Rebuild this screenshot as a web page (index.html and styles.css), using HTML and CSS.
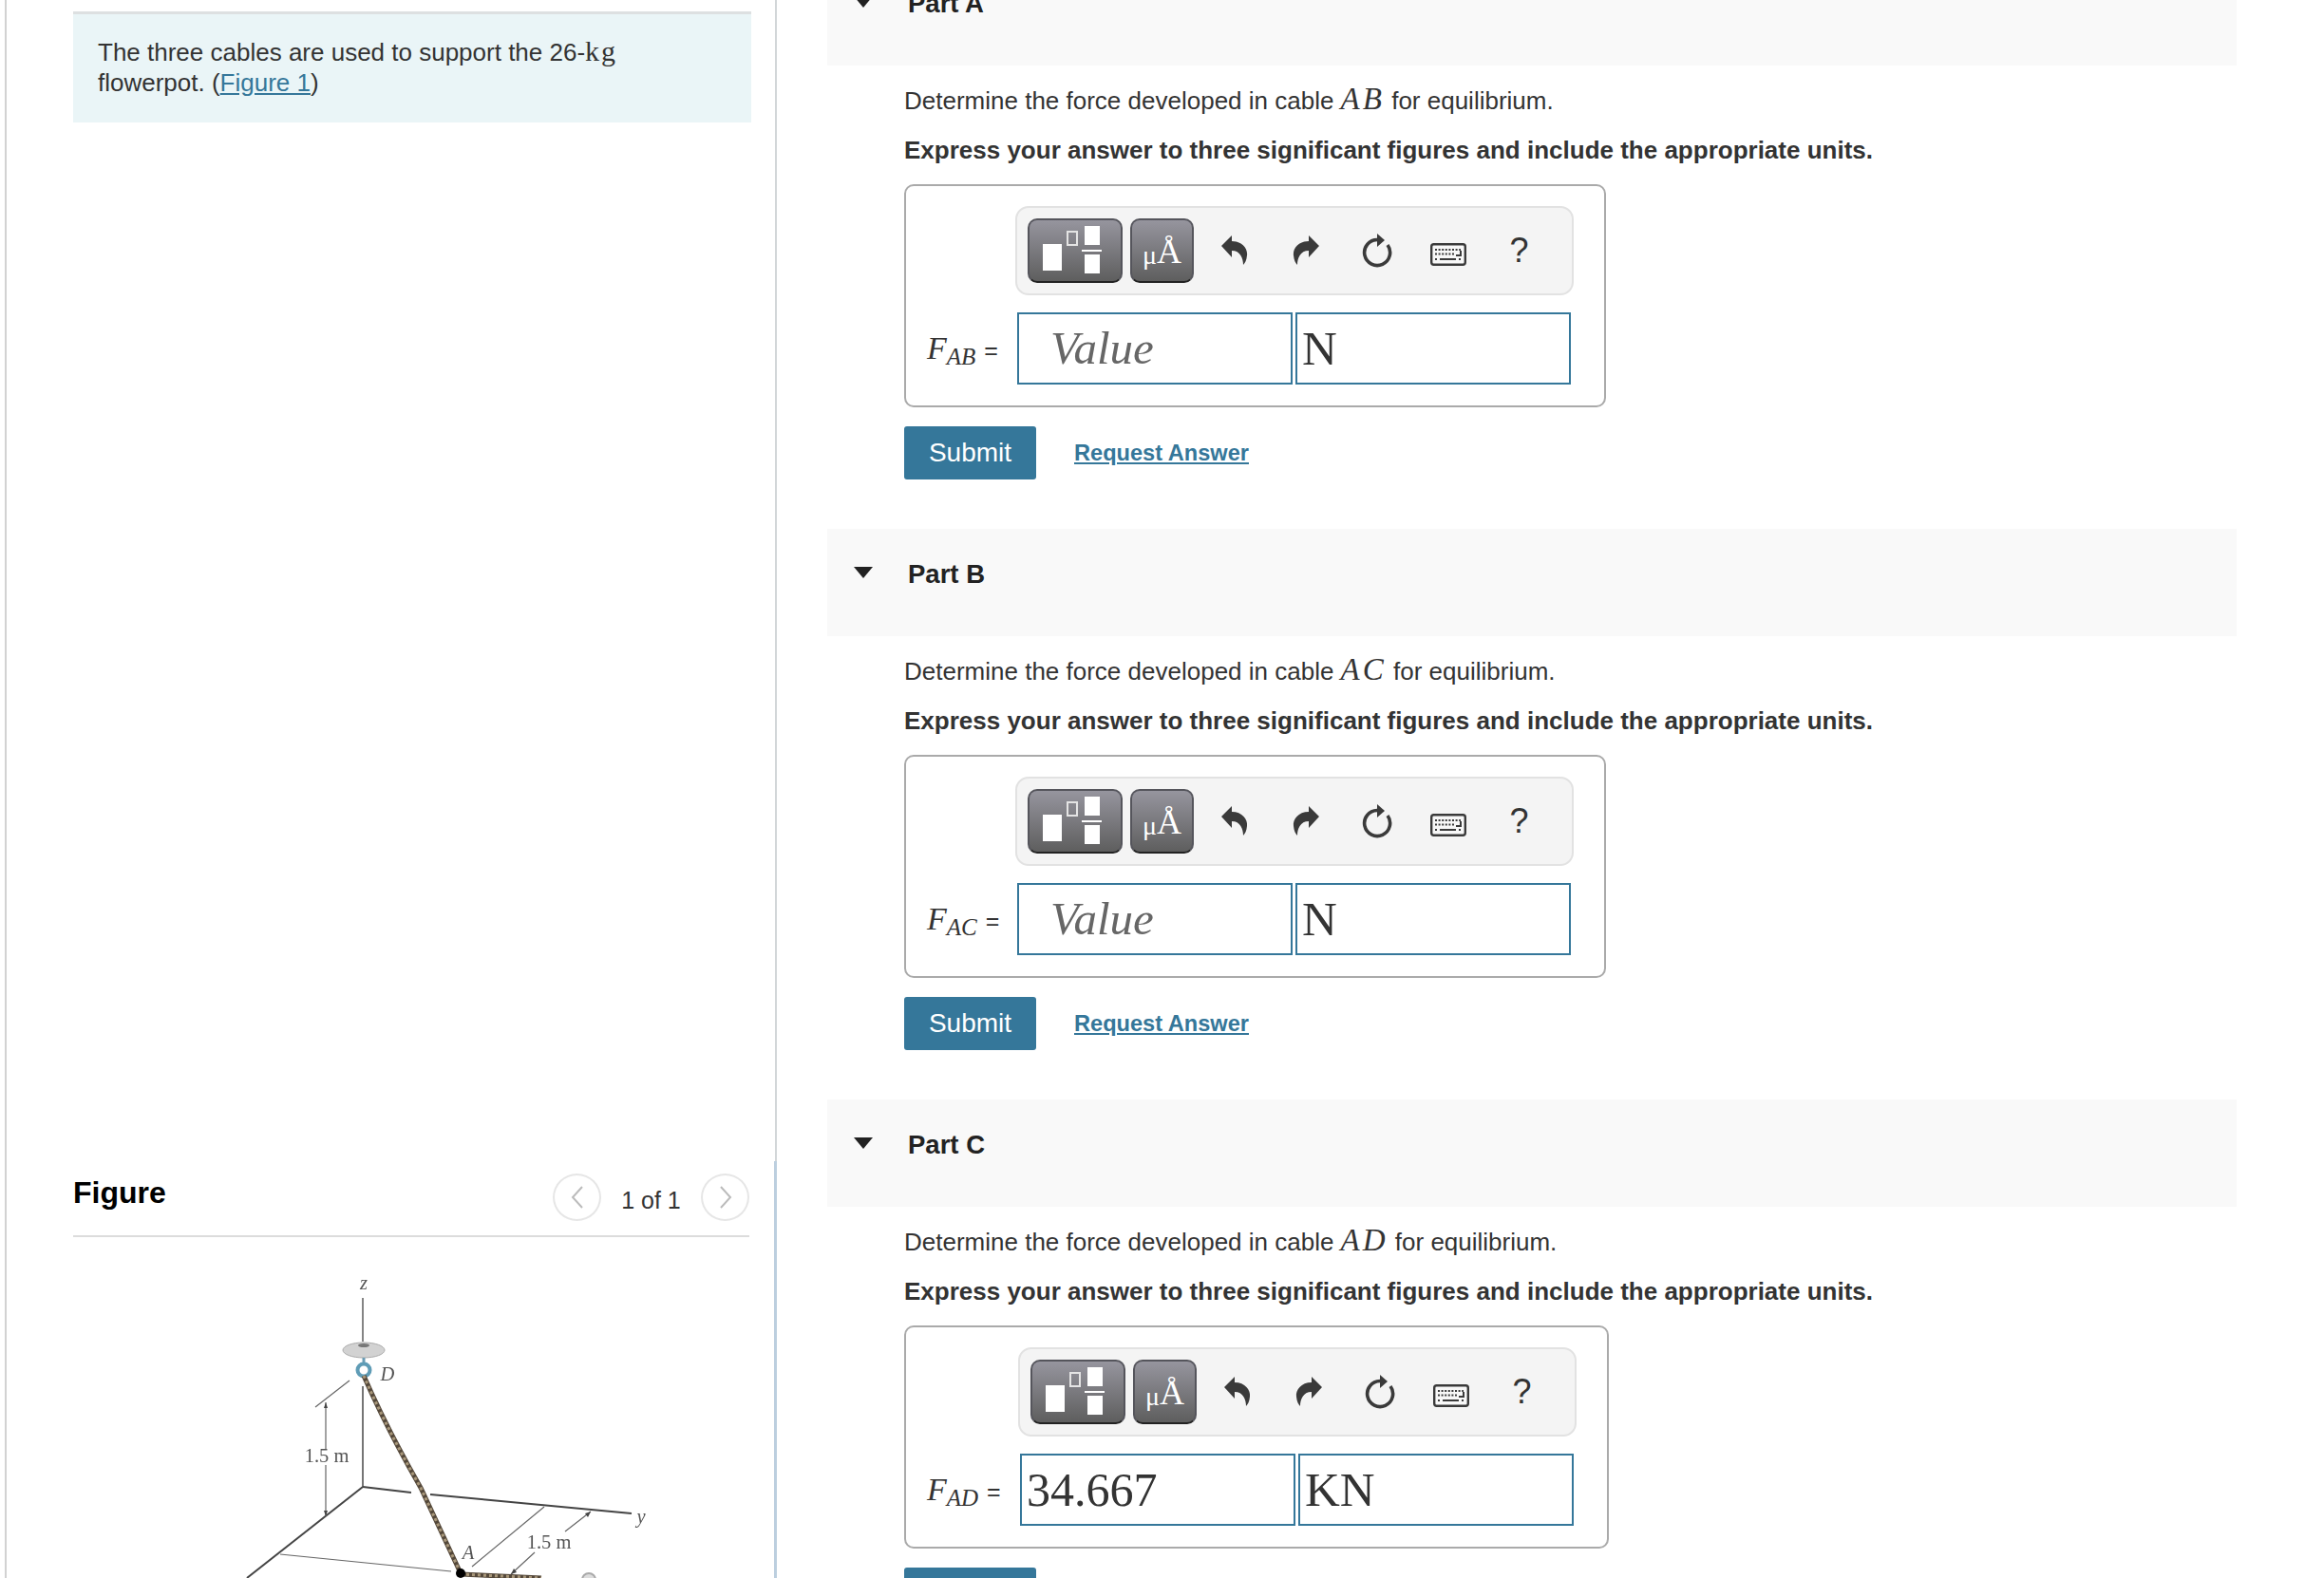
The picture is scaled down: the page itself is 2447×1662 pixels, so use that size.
FILE: index.html
```html
<!DOCTYPE html>
<html lang="en">
<head>
  <meta charset="UTF-8">
  <title>Cables and flowerpot</title>
  <link rel="stylesheet" href="styles.css">
</head>
<body>
  <!-- toolbar icons, reused in every answer box -->
  <svg class="sprite" aria-hidden="true">
    <symbol id="i-templates" viewBox="0 0 96 64">
      <rect x="14" y="25" width="20" height="28" fill="#fff"/>
      <rect x="40" y="12" width="10" height="14" fill="none" stroke="#e4e4e4" stroke-width="2"/>
      <rect x="58" y="6" width="16" height="20" fill="#fff"/>
      <rect x="55" y="31" width="21" height="2" fill="#fff"/>
      <rect x="58" y="36" width="16" height="20" fill="#fff"/>
    </symbol>
    <symbol id="i-undo" viewBox="0 0 28 32">
      <path d="M0 11 L11 0 V6 C22 6 28 14 27 21 C26.5 26 25 29 23 31 C23 24 20 16 11 16 V23 Z" fill="#3a3a3a"/>
    </symbol>
    <symbol id="i-reload" viewBox="0 0 32 37">
      <path d="M16 6.5 A13.5 13.5 0 1 0 27 12" fill="none" stroke="#3a3a3a" stroke-width="3.6"/>
      <path d="M16 0 L24 7 L16 14 Z" fill="#3a3a3a"/>
    </symbol>
    <symbol id="i-keyboard" viewBox="0 0 38 24">
      <rect x="1.2" y="1.2" width="35.6" height="21.6" rx="2.5" fill="#f8f8f8" stroke="#3a3a3a" stroke-width="2.4"/>
      <path d="M5 7 H32" stroke="#3a3a3a" stroke-width="2" stroke-dasharray="2 1.6"/>
      <path d="M5 11.5 H26" stroke="#3a3a3a" stroke-width="2" stroke-dasharray="2 1.6"/>
      <path d="M32 8 V13 H27" fill="none" stroke="#3a3a3a" stroke-width="2"/>
      <path d="M5 17 H7 M10 17 H27 M30 17 H32" stroke="#3a3a3a" stroke-width="2"/>
    </symbol>
  </svg>

  <div class="page">
    <div class="left-col">
      <section class="intro-wrap">
        <div class="intro">
          The three cables are used to support the 26-<span class="unit">kg</span><br>
          flowerpot. (<a href="#">Figure 1</a>)
        </div>
      </section>
      <section class="figure-wrap">
        <div class="figure-head">
          <h2>Figure</h2>
          <div class="pager">
            <span class="pager-btn"><svg width="14" height="26" viewBox="0 0 14 26"><path d="M12 2 L2 13 L12 24" fill="none" stroke="#bbb" stroke-width="2"/></svg></span>
            <span class="pager-text">1 of 1</span>
            <span class="pager-btn"><svg width="14" height="26" viewBox="0 0 14 26"><path d="M2 2 L12 13 L2 24" fill="none" stroke="#bbb" stroke-width="2"/></svg></span>
          </div>
        </div>
        <svg class="diagram" viewBox="77 1303 712 359" width="712" height="359">
          <g fill="none" stroke="#666">
            <path d="M382 1367 V1413" stroke-width="1.6"/>
            <path d="M382 1460 V1566" stroke-width="1.8"/>
            <path d="M382 1566 L433 1572 M453 1574 L665 1594" stroke="#444" stroke-width="2"/>
            <path d="M382 1566 L260 1662" stroke="#444" stroke-width="2"/>
            <path d="M332 1482 L368 1454" stroke-width="1.2"/>
            <path d="M343 1477 V1527 M343 1543 V1597" stroke-width="1.2"/>
            <path d="M295 1637 L475 1655" stroke-width="1.2"/>
            <path d="M497 1650 L573 1587" stroke-width="1.2"/>
            <path d="M595 1613 L622 1592 M563 1635 L538 1658" stroke-width="1.2"/>
          </g>
          <path d="M343 1477 l-2 6 h4 Z M343 1597 l-2 -6 h4 Z M622 1592 l-6 2 l3 4 Z M538 1658 l6 -2 l-3 -4 Z" fill="#444"/>
          <ellipse cx="383" cy="1422" rx="22" ry="8" fill="#d2d2d2" stroke="#aaa"/>
          <ellipse cx="383" cy="1417" rx="6" ry="2" fill="#777"/>
          <path d="M383 1430 V1436" stroke="#6b9db5" stroke-width="3"/>
          <circle cx="383" cy="1443" r="6.5" fill="#fff" stroke="#5f9cb6" stroke-width="4"/>
          <path class="rope" d="M383 1449 Q408 1506 443 1567 L485 1657"/>
          <path class="rope-twist" d="M383 1449 Q408 1506 443 1567 L485 1657"/>
          <path class="rope" d="M485 1658 L570 1662"/>
          <path class="rope-twist" d="M485 1658 L570 1662"/>
          <circle cx="485" cy="1657" r="5" fill="#000"/>
          <circle cx="620" cy="1664" r="7" fill="#ddd" stroke="#aaa" stroke-width="2"/>
          <g class="dia-label">
            <text x="383" y="1358" class="dia-it" text-anchor="middle">z</text>
            <text x="408" y="1454" class="dia-it" text-anchor="middle">D</text>
            <text x="493" y="1642" class="dia-it" text-anchor="middle">A</text>
            <text x="675" y="1604" class="dia-it" text-anchor="middle">y</text>
            <text x="344" y="1540" text-anchor="middle">1.5 m</text>
            <text x="578" y="1631" text-anchor="middle">1.5 m</text>
          </g>
        </svg>
      </section>
    </div>

    <div class="right-col">
      <section class="part">
        <header class="part-head"><span class="caret"></span><h3>Part A</h3></header>
        <div class="part-body">
          <p class="question">Determine the force developed in cable <span class="math">AB</span> for equilibrium.</p>
          <p class="instruction">Express your answer to three significant figures and include the appropriate units.</p>
          <div class="answer-box">
            <div class="toolbar">
              <button class="tool tool-wide"><svg width="96" height="64"><use href="#i-templates"/></svg></button>
              <button class="tool tool-unit"><span class="mu">μ</span><span class="ang">Å</span></button>
              <span class="slot first"><svg width="28" height="32"><use href="#i-undo"/></svg></span>
              <span class="slot"><svg class="flip" width="28" height="32"><use href="#i-undo"/></svg></span>
              <span class="slot"><svg width="32" height="37"><use href="#i-reload"/></svg></span>
              <span class="slot kbd"><svg width="38" height="24"><use href="#i-keyboard"/></svg></span>
              <span class="slot help">?</span>
            </div>
            <label class="var"><i>F</i><sub>AB</sub><span class="eq">=</span></label>
            <div class="field placeholder"><span>Value</span></div>
            <div class="field unit-field">N</div>
          </div>
          <div class="actions"><button class="submit">Submit</button><a href="#" class="request">Request Answer</a></div>
        </div>
      </section>

      <section class="part">
        <header class="part-head"><span class="caret"></span><h3>Part B</h3></header>
        <div class="part-body">
          <p class="question">Determine the force developed in cable <span class="math">AC</span> for equilibrium.</p>
          <p class="instruction">Express your answer to three significant figures and include the appropriate units.</p>
          <div class="answer-box">
            <div class="toolbar">
              <button class="tool tool-wide"><svg width="96" height="64"><use href="#i-templates"/></svg></button>
              <button class="tool tool-unit"><span class="mu">μ</span><span class="ang">Å</span></button>
              <span class="slot first"><svg width="28" height="32"><use href="#i-undo"/></svg></span>
              <span class="slot"><svg class="flip" width="28" height="32"><use href="#i-undo"/></svg></span>
              <span class="slot"><svg width="32" height="37"><use href="#i-reload"/></svg></span>
              <span class="slot kbd"><svg width="38" height="24"><use href="#i-keyboard"/></svg></span>
              <span class="slot help">?</span>
            </div>
            <label class="var"><i>F</i><sub>AC</sub><span class="eq">=</span></label>
            <div class="field placeholder"><span>Value</span></div>
            <div class="field unit-field">N</div>
          </div>
          <div class="actions"><button class="submit">Submit</button><a href="#" class="request">Request Answer</a></div>
        </div>
      </section>

      <section class="part">
        <header class="part-head"><span class="caret"></span><h3>Part C</h3></header>
        <div class="part-body">
          <p class="question">Determine the force developed in cable <span class="math">AD</span> for equilibrium.</p>
          <p class="instruction">Express your answer to three significant figures and include the appropriate units.</p>
          <div class="answer-box wide-var">
            <div class="toolbar">
              <button class="tool tool-wide"><svg width="96" height="64"><use href="#i-templates"/></svg></button>
              <button class="tool tool-unit"><span class="mu">μ</span><span class="ang">Å</span></button>
              <span class="slot first"><svg width="28" height="32"><use href="#i-undo"/></svg></span>
              <span class="slot"><svg class="flip" width="28" height="32"><use href="#i-undo"/></svg></span>
              <span class="slot"><svg width="32" height="37"><use href="#i-reload"/></svg></span>
              <span class="slot kbd"><svg width="38" height="24"><use href="#i-keyboard"/></svg></span>
              <span class="slot help">?</span>
            </div>
            <label class="var"><i>F</i><sub>AD</sub><span class="eq">=</span></label>
            <div class="field">34.667</div>
            <div class="field unit-field">KN</div>
          </div>
          <div class="actions"><button class="submit">Submit</button><a href="#" class="request">Request Answer</a></div>
        </div>
      </section>
    </div>
  </div>
</body>
</html>
```

FILE: styles.css
```css
html, body {
  margin: 0;
  height: 1662px;
  overflow: hidden;
  background: #fff;
  color: #333;
  font-family: "Liberation Sans", Arial, sans-serif;
  font-size: 26px;
}

.sprite {
  display: none;
}

.page {
  display: flex;
  height: 1662px;
  overflow: hidden;
  padding-left: 5px;
  box-sizing: border-box;
}

/* left panel */
.left-col {
  width: 813px;
  flex: none;
  border-left: 2px solid #d2d2d2;
  box-sizing: border-box;
}

.intro-wrap {
  height: 1223px;
  padding: 12px 25px 0 70px;
  border-right: 2px solid #d2d6d8;
  box-sizing: border-box;
}

.intro {
  border-top: 3px solid #dde0e1;
  background: #eaf5f7;
  height: 117px;
  padding: 24px 26px 0;
  box-sizing: border-box;
  line-height: 32px;
}

.intro a {
  color: #35779a;
}

.unit {
  font-family: "Liberation Serif", serif;
  font-size: 30px;
  line-height: 0;
  letter-spacing: 2px;
}

.figure-wrap {
  height: 439px;
  padding: 0 26px 0 70px;
  border-right: 3px solid #bccfdf;
  box-sizing: border-box;
}

.figure-head {
  display: flex;
  justify-content: space-between;
  align-items: flex-start;
  height: 78px;
  border-bottom: 2px solid #dcdcdc;
}

.figure-head h2 {
  margin: 15px 0 0;
  color: #000;
  font-size: 32px;
  line-height: 36px;
}

.pager {
  display: flex;
  align-items: center;
  margin-top: 13px;
}

.pager-btn {
  display: flex;
  align-items: center;
  justify-content: center;
  width: 47px;
  height: 46px;
  border: 2px solid #e6e6e6;
  border-radius: 50%;
}

.pager-text {
  width: 105px;
  text-align: center;
  padding-top: 6px;
  font-size: 25px;
}

.diagram {
  display: block;
  filter: blur(0.6px);
}

.rope {
  fill: none;
  stroke: #54483a;
  stroke-width: 5;
}

.rope-twist {
  fill: none;
  stroke: #a8977a;
  stroke-width: 3;
  stroke-dasharray: 3 3;
}

.dia-label text {
  font-family: "Liberation Serif", serif;
  font-size: 20.5px;
  fill: #555;
}

.dia-label .dia-it {
  font-style: italic;
}

/* right panel */
.right-col {
  width: 1484px;
  flex: none;
  margin: -44px 0 0 53px;
}

.part {
  margin-bottom: 52px;
}

.part-head {
  display: flex;
  align-items: flex-start;
  height: 113px;
  padding: 31px 0 0 28px;
  box-sizing: border-box;
  background: #f9f9f9;
}

.caret {
  width: 0;
  height: 0;
  margin: 9px 37px 0 0;
  border-left: 10.5px solid transparent;
  border-right: 10.5px solid transparent;
  border-top: 12px solid #222;
}

.part-head h3 {
  margin: 0;
  color: #222;
  font-size: 27.5px;
  line-height: 34px;
}

.part-body {
  padding-left: 81px;
}

.question {
  margin: 21px 0 20px;
  line-height: 32px;
}

.math {
  font-family: "Liberation Serif", serif;
  font-style: italic;
  font-size: 33px;
  line-height: 0;
  letter-spacing: 3px;
}

.instruction {
  margin: 0 0 20px;
  line-height: 32px;
  font-weight: bold;
}

.answer-box {
  display: inline-grid;
  grid-template-columns: 92px 290px 290px;
  column-gap: 3px;
  row-gap: 18px;
  align-items: center;
  height: 235px;
  padding: 21px 35px 22px 22px;
  border: 2px solid #aaa;
  border-radius: 10px;
  box-sizing: border-box;
  vertical-align: top;
}

.answer-box.wide-var {
  grid-template-columns: 95px 290px 290px;
}

.toolbar {
  grid-column: 2 / 4;
  display: flex;
  align-items: center;
  height: 94px;
  margin: 0 -3px 0 -2px;
  padding-left: 11px;
  border: 2px solid #e2e2e2;
  border-radius: 14px;
  background: #f4f4f4;
  box-sizing: border-box;
}

.tool {
  display: flex;
  align-items: flex-end;
  justify-content: center;
  height: 68px;
  padding: 0;
  border: 2px solid #55555c;
  border-bottom-color: #222;
  border-radius: 10px;
  background: linear-gradient(#96959e, #5e5e5e);
  box-sizing: border-box;
  color: #fff;
  font-family: "Liberation Serif", serif;
}

.tool-wide {
  width: 100px;
  margin-right: 8px;
  align-items: center;
}

.tool-unit {
  width: 67px;
  padding-bottom: 13px;
  line-height: 1;
}

.mu {
  font-size: 28px;
}

.ang {
  font-size: 36px;
}

.slot {
  display: flex;
  align-items: center;
  justify-content: center;
  width: 75px;
}

.slot.first {
  margin-left: 5px;
}

.kbd {
  padding-top: 8px;
}

.flip {
  transform: scaleX(-1);
}

.help {
  font-size: 36px;
  color: #333;
}

.var {
  font-family: "Liberation Serif", serif;
  font-size: 34px;
  white-space: nowrap;
}

.var sub {
  font-size: 25px;
  font-style: italic;
  line-height: 0;
  vertical-align: -6px;
}

.eq {
  margin-left: 9px;
  font-family: "Liberation Sans", Arial, sans-serif;
  font-size: 25px;
}

.field {
  height: 76px;
  padding-left: 5px;
  border: 2px solid #35779a;
  box-sizing: border-box;
  font-family: "Liberation Serif", serif;
  font-size: 50px;
  line-height: 72px;
}

.unit-field {
  font-size: 51px;
}

.placeholder {
  padding-left: 33px;
  color: #666;
  font-style: italic;
  font-size: 49px;
}

.actions {
  display: flex;
  align-items: center;
  margin-top: 20px;
}

.submit {
  width: 139px;
  height: 56px;
  padding: 0;
  border: none;
  border-radius: 3px;
  background: #35779a;
  color: #fff;
  font-family: "Liberation Sans", Arial, sans-serif;
  font-size: 28px;
}

.request {
  margin-left: 40px;
  color: #35779a;
  font-size: 23.6px;
  font-weight: bold;
}
```
